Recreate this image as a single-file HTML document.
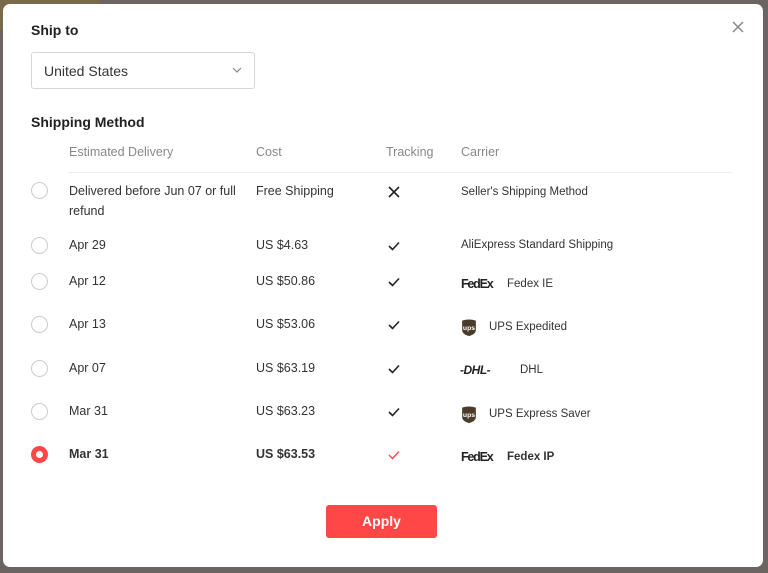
<!DOCTYPE html>
<html><head><style>
body{margin:0;width:768px;height:573px;background:#6b6462;position:relative;overflow:hidden;font-family:"Liberation Sans",sans-serif;color:#333}
.bgtl{position:absolute;left:0;top:0;width:100px;height:30px;background:#7a6a4a}
.modal{position:absolute;left:3px;top:4px;width:760px;height:563px;background:#fff;border-radius:7px}
.a{position:absolute;white-space:nowrap}
.h{font-weight:bold;font-size:14px;color:#222}
.sel{position:absolute;left:28px;top:48px;width:222px;height:35px;border:1px solid #d6d6d6;border-radius:3px}
.hd{font-size:12.5px;color:#888}
.t{font-size:12.5px;color:#333}
.c{font-size:11.5px;color:#333}
.r{position:absolute;left:28px;width:17px;height:17px;border:1px solid #ccc;border-radius:50%;box-sizing:border-box}
.fx{font-family:"Liberation Sans",sans-serif;font-weight:bold;font-size:12.5px;letter-spacing:-1.2px;color:#222}
.ups{position:absolute;width:16px;height:19px}
.b{font-weight:bold}
</style></head><body>
<div class="bgtl"></div>
<div class="modal">
<svg class="a" style="left:729px;top:17px" width="12" height="12"><path d="M1 1l10 10M11 1L1 11" stroke="#888" stroke-width="1.5"/></svg>
<div class="a h" style="left:28px;top:18px">Ship to</div>
<div class="sel"></div>
<div class="a" style="left:41px;top:59px;font-size:14px;color:#333">United States</div>
<svg class="a" style="left:229px;top:63px" width="10" height="7"><path d="M1 1l4 4 4-4" stroke="#888" fill="none" stroke-width="1.2"/></svg>
<div class="a h" style="left:28px;top:110px">Shipping Method</div>
<div class="a hd" style="left:66px;top:141px">Estimated Delivery</div>
<div class="a hd" style="left:253px;top:141px">Cost</div>
<div class="a hd" style="left:383px;top:141px">Tracking</div>
<div class="a hd" style="left:458px;top:141px">Carrier</div>
<div class="a" style="left:65px;top:168px;width:665px;height:1px;background:#eee"></div>

<div class="r" style="top:178px"></div>
<div class="a t" style="left:66px;top:177px;line-height:20px">Delivered before Jun 07 or full<br>refund</div>
<div class="a t" style="left:253px;top:180px">Free Shipping</div>
<svg class="a" style="left:385px;top:182px" width="12" height="12"><path d="M1 1l10 10M11 1L1 11" stroke="#222" stroke-width="1.6"/></svg>
<div class="a c" style="left:458px;top:182px">Seller's Shipping Method</div>

<div class="r" style="top:233px"></div>
<div class="a t" style="left:66px;top:234px">Apr 29</div>
<div class="a t" style="left:253px;top:234px">US $4.63</div>
<svg class="a" style="left:385px;top:237px" width="12" height="10"><path d="M1 5l3.5 3.5L11 1.5" stroke="#222" fill="none" stroke-width="1.6"/></svg>
<div class="a c" style="left:458px;top:235px">AliExpress Standard Shipping</div>

<div class="r" style="top:269px"></div>
<div class="a t" style="left:66px;top:270px">Apr 12</div>
<div class="a t" style="left:253px;top:270px">US $50.86</div>
<svg class="a" style="left:385px;top:273px" width="12" height="10"><path d="M1 5l3.5 3.5L11 1.5" stroke="#222" fill="none" stroke-width="1.6"/></svg>
<div class="a fx" style="left:458px;top:273px">FedEx</div>
<div class="a c" style="left:504px;top:274px">Fedex IE</div>

<div class="r" style="top:312px"></div>
<div class="a t" style="left:66px;top:313px">Apr 13</div>
<div class="a t" style="left:253px;top:313px">US $53.06</div>
<svg class="a" style="left:385px;top:316px" width="12" height="10"><path d="M1 5l3.5 3.5L11 1.5" stroke="#222" fill="none" stroke-width="1.6"/></svg>
<svg class="ups" style="left:458px;top:314px" viewBox="0 0 14 16"><path d="M1 2Q7 0 13 2V10Q13 14 7 15.5 1 14 1 10Z" fill="#4a3b2a"/><text x="7" y="10" font-size="6" fill="#fff" text-anchor="middle" font-family="Liberation Sans" font-weight="bold">ups</text></svg>
<div class="a c" style="left:486px;top:317px">UPS Expedited</div>

<div class="r" style="top:356px"></div>
<div class="a t" style="left:66px;top:357px">Apr 07</div>
<div class="a t" style="left:253px;top:357px">US $63.19</div>
<svg class="a" style="left:385px;top:360px" width="12" height="10"><path d="M1 5l3.5 3.5L11 1.5" stroke="#222" fill="none" stroke-width="1.6"/></svg>
<div class="a" style="left:457px;top:359px;font-size:12px;font-weight:bold;font-style:italic;color:#222;letter-spacing:-0.5px">-DHL-</div>
<div class="a c" style="left:517px;top:360px">DHL</div>

<div class="r" style="top:399px"></div>
<div class="a t" style="left:66px;top:400px">Mar 31</div>
<div class="a t" style="left:253px;top:400px">US $63.23</div>
<svg class="a" style="left:385px;top:403px" width="12" height="10"><path d="M1 5l3.5 3.5L11 1.5" stroke="#222" fill="none" stroke-width="1.6"/></svg>
<svg class="ups" style="left:458px;top:401px" viewBox="0 0 14 16"><path d="M1 2Q7 0 13 2V10Q13 14 7 15.5 1 14 1 10Z" fill="#4a3b2a"/><text x="7" y="10" font-size="6" fill="#fff" text-anchor="middle" font-family="Liberation Sans" font-weight="bold">ups</text></svg>
<div class="a c" style="left:486px;top:404px">UPS Express Saver</div>

<div class="r" style="top:442px;border:5px solid #ff4747"></div>
<div class="a t b" style="left:66px;top:443px">Mar 31</div>
<div class="a t b" style="left:253px;top:443px">US $63.53</div>
<svg class="a" style="left:385px;top:446px" width="12" height="10"><path d="M1 5l3.5 3.5L11 1.5" stroke="#ff4747" fill="none" stroke-width="1.4"/></svg>
<div class="a fx" style="left:458px;top:446px">FedEx</div>
<div class="a c b" style="left:504px;top:447px">Fedex IP</div>

<div class="a" style="left:323px;top:501px;width:111px;height:33px;background:#ff4747;border-radius:3px;color:#fff;font-weight:bold;font-size:14px;text-align:center;line-height:33px">Apply</div>
</div>
</body></html>
